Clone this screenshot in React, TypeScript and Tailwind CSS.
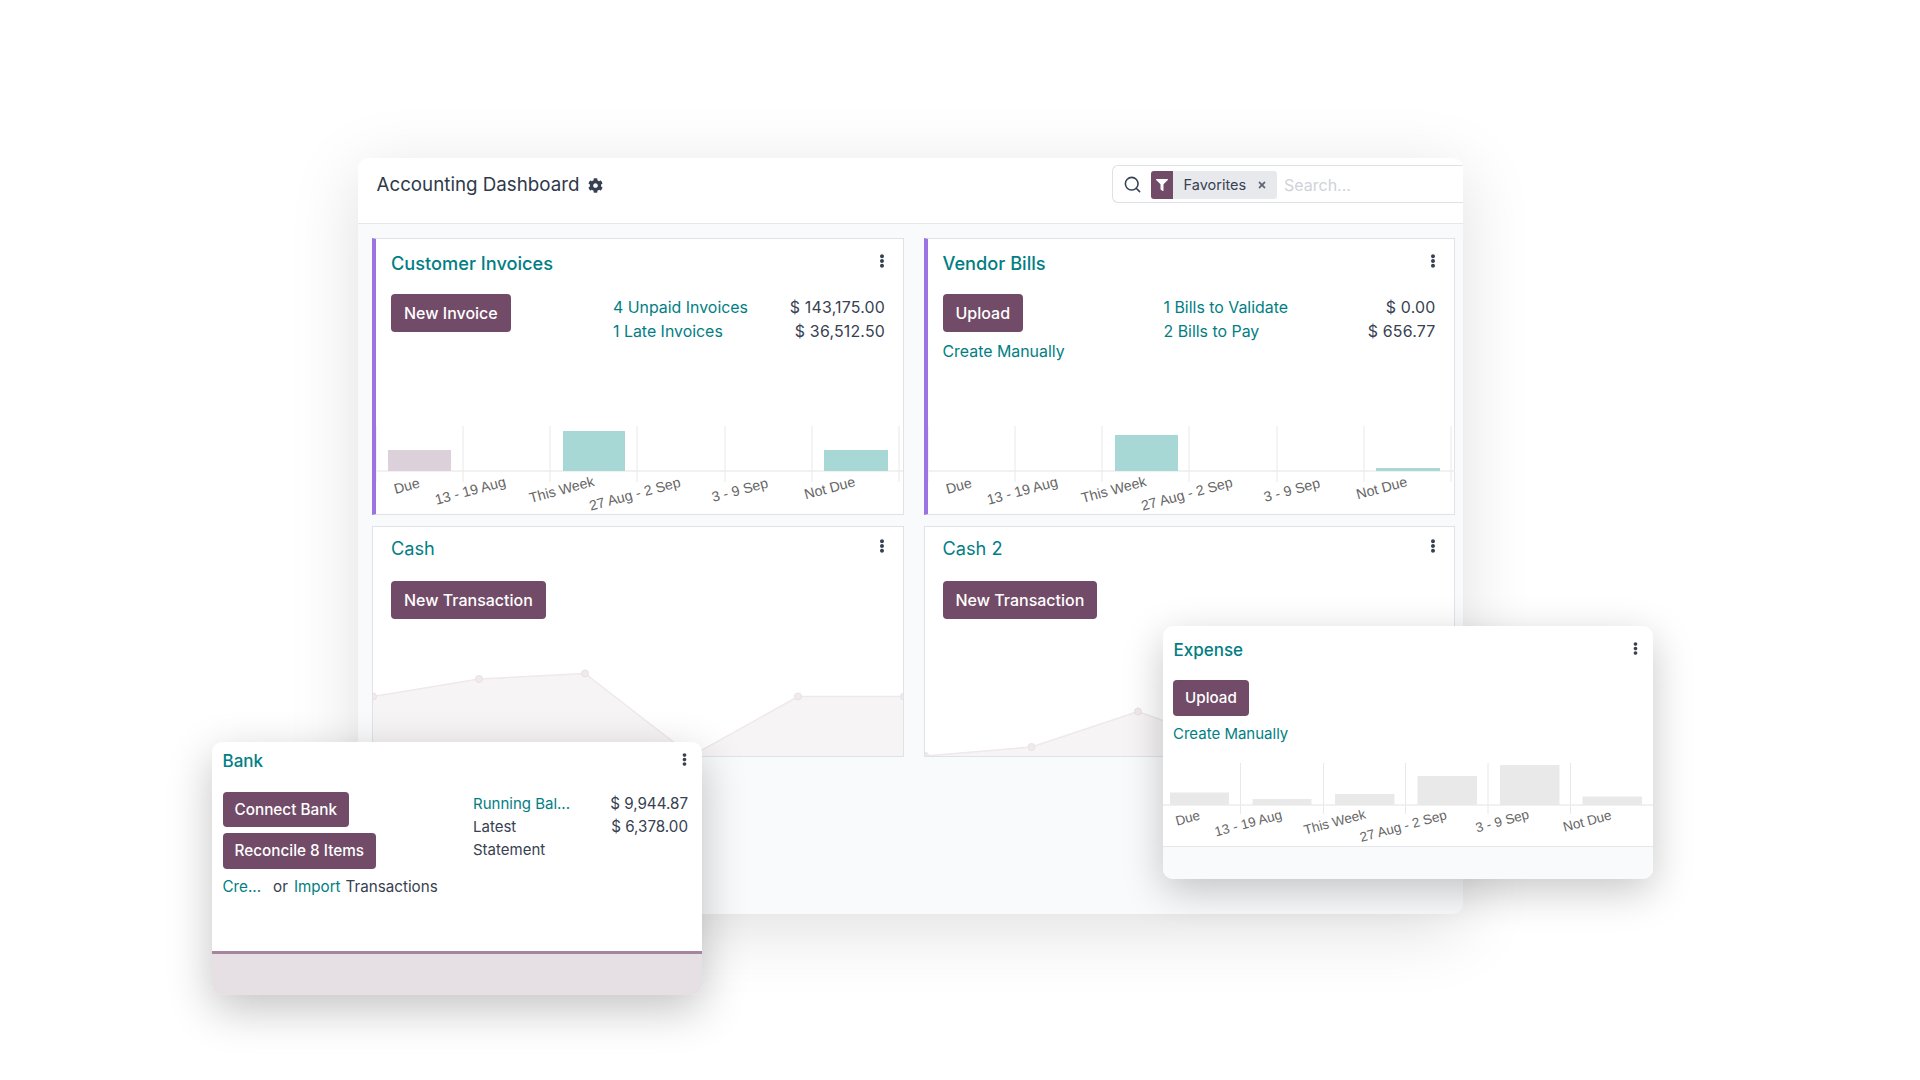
import React from "react";
import { FaCog, FaEllipsisV, FaFilter, FaTimes } from "react-icons/fa";
import { Search } from "lucide-react";

const LABELS = ["Due", "13 - 19 Aug", "This Week", "27 Aug - 2 Sep", "3 - 9 Sep", "Not Due"];
const LABEL_OFFSET: [number, number][] = [
  [31, 61],
  [94.5, 65.7],
  [186, 64.7],
  [259, 69],
  [364, 65],
  [454, 63],
];

type Bar = { x: number; w: number; top: number; color: string };

function BarChart({ bars, width, height, base, lines, labels, lineTop, lineBottom, fontSize }: {
  bars: Bar[];
  width: number;
  height: number;
  base: number;
  lines: number[];
  labels: [number, number][];
  lineTop: number;
  lineBottom: number;
  fontSize: number;
}) {
  return (
    <svg width={width} height={height} className="block shrink-0">
      {lines.map((x) => (
        <line key={x} x1={x} x2={x} y1={lineTop} y2={lineBottom} stroke="#e8e8e8" strokeWidth="1" />
      ))}
      <line x1="0" x2={width} y1={base} y2={base} stroke="#ececec" strokeWidth="1.5" />
      {bars.map((b) => (
        <rect key={b.x} x={b.x} y={b.top} width={b.w} height={base - b.top} fill={b.color} />
      ))}
      {LABELS.map((t, i) => (
        <text
          key={t}
          x={labels[i][0]}
          y={labels[i][1]}
          transform={`rotate(-15 ${labels[i][0]} ${labels[i][1]})`}
          textAnchor="middle"
          dominantBaseline="middle"
          fill="#666666"
          fontSize={fontSize}
          fontFamily="'Liberation Sans', sans-serif"
        >
          {t}
        </text>
      ))}
    </svg>
  );
}

function InvoiceChart({ bars }: { bars: Bar[] }) {
  return (
    <BarChart
      bars={bars}
      width={527}
      height={88}
      base={45}
      lines={[0, 87, 174, 261, 349, 436, 523]}
      labels={LABEL_OFFSET}
      lineTop={0}
      lineBottom={56}
      fontSize={14.2}
    />
  );
}

function LineChart({ points }: { points: [number, number][] }) {
  const w = 530;
  const h = 90;
  const line = points.map((p) => p.join(",")).join(" ");
  return (
    <svg width={w} height={h} className="block shrink-0 mt-auto">
      <polygon points={`0,${h} ${line} ${points[points.length - 1][0]},${h}`} fill="#f7f4f6" />
      <polyline points={line} fill="none" stroke="#efe8ed" strokeWidth="1.5" />
      {points.map((p) => (
        <circle key={p[0]} cx={p[0]} cy={p[1]} r="3.5" fill="#f0eaee" stroke="#e8e0e5" />
      ))}
    </svg>
  );
}

function Dots() {
  return <FaEllipsisV className="text-[14px] text-[#374151]" />;
}

function PrimaryButton({ children, h = "h-[38px]", text = "text-[16px]", px = "px-[13px]" }: {
  children: React.ReactNode;
  h?: string;
  text?: string;
  px?: string;
}) {
  return (
    <button className={`${h} ${text} ${px} flex w-fit items-center rounded-[4px] bg-[#714b67] font-medium leading-none whitespace-nowrap text-white`}>
      {children}
    </button>
  );
}

function Stats({ rows }: { rows: [string, string][] }) {
  return (
    <div className="flex flex-1 flex-col pt-[2px] text-[15.9px] leading-6">
      {rows.map(([label, value]) => (
        <div key={label} className="flex justify-between">
          <span className="text-[#017e84]">{label}</span>
          <span className="tracking-[0.2px] text-[#374151]">{value}</span>
        </div>
      ))}
    </div>
  );
}

export default function App() {
  return (
    <div className="relative h-[1080px] w-[1920px] overflow-hidden bg-white font-['Inter',sans-serif] text-[#374151]">
      {/* Main window */}
      <div className="absolute top-[158px] left-[358px] flex h-[756px] w-[1105px] flex-col overflow-hidden rounded-[10px] bg-[#f9fafb] shadow-[0_15px_70px_rgba(0,0,0,0.13)]">
        <header className="flex h-[66px] shrink-0 items-start justify-between border-b border-[#e5e7eb] bg-white pt-[7px] pl-[18.5px]">
          <div className="mt-px flex h-[38px] items-center gap-[8px] text-[18.75px] text-[#2f3a4a]">
            <span>Accounting Dashboard</span>
            <FaCog className="text-[15px] text-[#374151]" />
          </div>
          <div className="flex h-[38px] w-[351px] items-center rounded-l-[6px] border-y border-l border-[#dee2e6] pl-[10px]">
            <Search size={19} strokeWidth={2} className="text-[#374151]" />
            <div className="mt-px ml-[9px] flex h-[28px] w-[126px] items-stretch overflow-hidden rounded-[3px] bg-[#e7e9ed] text-[14.5px]">
              <span className="flex w-[22px] items-center justify-center bg-[#714b67]">
                <FaFilter className="text-[12px] text-white" />
              </span>
              <span className="flex items-center pl-[10.5px]">Favorites</span>
              <FaTimes className="mt-[9px] ml-[11px] text-[10px] text-[#5f6673]" />
            </div>
            <span className="mt-px ml-[7px] text-[16px] text-[#cfd3d8]">Search...</span>
          </div>
        </header>

        <div className="grid grid-cols-[532px_531px] grid-rows-[277px_231px] gap-x-[19.5px] gap-y-[11px] pt-[14px] pl-[14px]">
          {/* Customer invoices */}
          <section className="flex flex-col border border-l-4 border-[#dfe2e6] border-l-[#9b74e4] bg-white">
            <div className="mt-[13px] flex h-[24px] items-center justify-between pr-[14px] pl-[15px]">
              <h2 className="text-[18.2px] font-medium text-[#017e84]">Customer Invoices</h2>
              <span className="-mt-[6px]"><Dots /></span>
            </div>
            <div className="mt-[18px] flex pr-[18px] pl-[15px]">
              <div className="w-[222px]">
                <PrimaryButton>New Invoice</PrimaryButton>
              </div>
              <Stats rows={[["4 Unpaid Invoices", "$ 143,175.00"], ["1 Late Invoices", "$ 36,512.50"]]} />
            </div>
            <div className="mt-auto">
              <InvoiceChart
                bars={[
                  { x: 12, w: 63, top: 24, color: "#dcd0da" },
                  { x: 187, w: 62, top: 5, color: "#a8d8d5" },
                  { x: 448, w: 64, top: 24, color: "#a8d8d5" },
                ]}
              />
            </div>
          </section>

          {/* Vendor bills */}
          <section className="flex flex-col border border-l-4 border-[#dfe2e6] border-l-[#9b74e4] bg-white">
            <div className="mt-[13px] flex h-[24px] items-center justify-between pr-[14px] pl-[15px]">
              <h2 className="text-[18.2px] font-medium text-[#017e84]">Vendor Bills</h2>
              <span className="-mt-[6px]"><Dots /></span>
            </div>
            <div className="mt-[18px] flex pr-[18px] pl-[15px]">
              <div className="w-[221px]">
                <PrimaryButton>Upload</PrimaryButton>
                <div className="mt-[11px] text-[15.9px] leading-[18px] text-[#017e84]">Create Manually</div>
              </div>
              <Stats rows={[["1 Bills to Validate", "$ 0.00"], ["2 Bills to Pay", "$ 656.77"]]} />
            </div>
            <div className="mt-auto">
              <InvoiceChart
                bars={[
                  { x: 187, w: 63, top: 9, color: "#a8d8d5" },
                  { x: 448, w: 64, top: 42, color: "#a8d8d5" },
                ]}
              />
            </div>
          </section>

          {/* Cash */}
          <section className="flex flex-col overflow-hidden border border-[#dfe2e6] bg-white">
            <div className="mt-[10px] flex h-[24px] items-center justify-between pr-[14px] pl-[18px]">
              <h2 className="text-[18.2px] text-[#017e84]">Cash</h2>
              <span className="-mt-[6px]"><Dots /></span>
            </div>
            <div className="mt-[20px] pl-[18px]">
              <PrimaryButton>New Transaction</PrimaryButton>
            </div>
            <LineChart points={[[0, 30.5], [106, 13], [212, 7.5], [318.5, 90], [425, 30.5], [531, 30.5]]} />
          </section>

          {/* Cash 2 */}
          <section className="flex flex-col overflow-hidden border border-[#dfe2e6] bg-white">
            <div className="mt-[10px] flex h-[24px] items-center justify-between pr-[14px] pl-[18px]">
              <h2 className="text-[18.2px] text-[#017e84]">Cash 2</h2>
              <span className="-mt-[6px]"><Dots /></span>
            </div>
            <div className="mt-[20px] pl-[18px]">
              <PrimaryButton>New Transaction</PrimaryButton>
            </div>
            <LineChart points={[[0, 90], [106.5, 81], [213, 45.5], [319, 84], [425, 84], [531, 84]]} />
          </section>
        </div>
      </div>

      {/* Expense floating window */}
      <div className="absolute top-[626px] left-[1163px] flex h-[253px] w-[490px] flex-col overflow-hidden rounded-[10px] bg-white shadow-[0_12px_40px_rgba(0,0,0,0.22)]">
        <div className="mt-[13px] flex h-[24px] items-center justify-between pr-[11px] pl-[10.5px]">
          <h2 className="text-[17px] font-medium text-[#017e84]">Expense</h2>
          <span className="-mt-[6px]"><FaEllipsisV className="text-[13px] text-[#374151]" /></span>
        </div>
        <div className="mt-[17px] pl-[10px]">
          <PrimaryButton h="h-[36px]" text="text-[15.2px]" px="px-[12px]">Upload</PrimaryButton>
          <div className="mt-[9px] text-[15px] leading-[18px] text-[#017e84]">Create Manually</div>
        </div>
        <div className="mt-[20px]">
          <BarChart
            width={490}
            height={83}
            base={42}
            lineTop={0}
            lineBottom={51}
            fontSize={13.5}
            lines={[77.5, 160.5, 242.5, 325, 407.5]}
            labels={[[25, 56], [85.5, 61], [172, 60], [240.5, 64], [339.5, 59], [424.5, 59]]}
            bars={[
              { x: 7, w: 59, top: 29.5, color: "#e9e9e9" },
              { x: 89.5, w: 59, top: 36, color: "#e9e9e9" },
              { x: 172, w: 59.5, top: 31, color: "#e9e9e9" },
              { x: 254.5, w: 59.5, top: 13, color: "#e9e9e9" },
              { x: 337, w: 59.5, top: 2, color: "#e9e9e9" },
              { x: 419.5, w: 59.5, top: 33.5, color: "#e9e9e9" },
            ]}
          />
        </div>
        <div className="flex-1 border-t border-[#e5e7eb] bg-[#f9fafb]" />
      </div>

      {/* Bank floating window */}
      <div className="absolute top-[742px] left-[212px] flex h-[253px] w-[490px] flex-col overflow-hidden rounded-[10px] bg-white shadow-[0_14px_45px_rgba(0,0,0,0.24)]">
        <div className="mt-[8px] flex h-[24px] items-center justify-between pr-[11px] pl-[10.5px]">
          <h2 className="text-[17px] font-medium text-[#017e84]">Bank</h2>
          <span className="-mt-[6px]"><FaEllipsisV className="text-[13px] text-[#374151]" /></span>
        </div>
        <div className="mt-[18px] flex pr-[14px] pl-[10.5px]">
          <div className="flex w-[250.5px] flex-col gap-[6px]">
            <PrimaryButton h="h-[35px]" text="text-[15.3px]" px="px-[12px]">Connect Bank</PrimaryButton>
            <PrimaryButton h="h-[36px]" text="text-[15.3px]" px="px-[12px]">Reconcile 8 Items</PrimaryButton>
            <div className="mt-[3px] flex text-[15.2px] leading-[18px]">
              <span className="text-[#017e84]">Cre...</span>
              <span className="ml-[12px]">or</span>
              <span className="ml-[6px] text-[#017e84]">Import</span>
              <span className="ml-[5px]">Transactions</span>
            </div>
          </div>
          <div className="flex flex-1 text-[15px] leading-[23px]">
            <div className="flex w-[120px] flex-col">
              <span className="text-[#017e84]">Running Bal...</span>
              <span>Latest<br />Statement</span>
            </div>
            <div className="flex flex-1 flex-col items-end text-[15.2px]">
              <span>$ 9,944.87</span>
              <span>$ 6,378.00</span>
            </div>
          </div>
        </div>
        <div className="mt-auto h-[44px] border-t-[3px] border-[#a5859d] bg-[#e6dfe4]" />
      </div>
    </div>
  );
}
